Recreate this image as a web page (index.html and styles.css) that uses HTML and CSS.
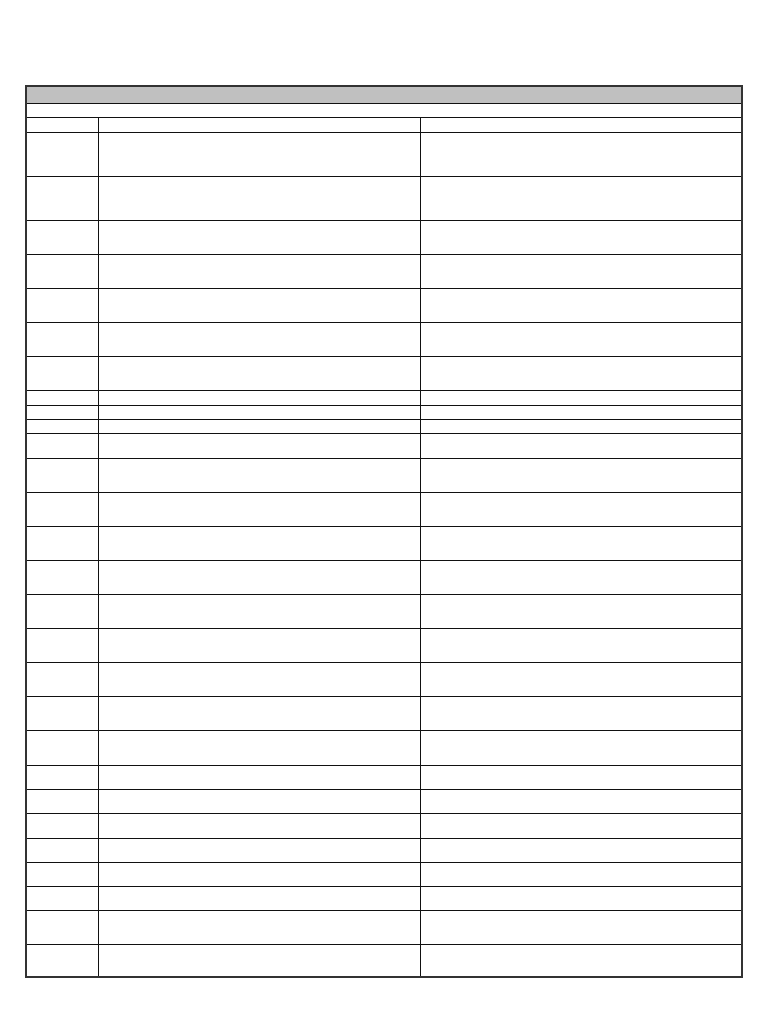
FILE: index.html
```html
<!DOCTYPE html>
<html lang="en">
<head>
<meta charset="utf-8">
<title>Table</title>
<link rel="stylesheet" href="styles.css">
</head>
<body>
<div class="page">
<table class="sheet">
<colgroup><col class="c1"><col class="c2"><col class="c3"></colgroup>
<tbody>
<tr class="r17 head"><td colspan="3"></td></tr>
<tr class="r14"><td colspan="3"></td></tr>
<tr class="r15"><td></td><td></td><td></td></tr>
<tr class="r44"><td></td><td></td><td></td></tr>
<tr class="r44"><td></td><td></td><td></td></tr>
<tr class="r34"><td></td><td></td><td></td></tr>
<tr class="r34"><td></td><td></td><td></td></tr>
<tr class="r34"><td></td><td></td><td></td></tr>
<tr class="r34"><td></td><td></td><td></td></tr>
<tr class="r34"><td></td><td></td><td></td></tr>
<tr class="r15"><td></td><td></td><td></td></tr>
<tr class="r14"><td></td><td></td><td></td></tr>
<tr class="r14"><td></td><td></td><td></td></tr>
<tr class="r25"><td></td><td></td><td></td></tr>
<tr class="r34"><td></td><td></td><td></td></tr>
<tr class="r34"><td></td><td></td><td></td></tr>
<tr class="r34"><td></td><td></td><td></td></tr>
<tr class="r34"><td></td><td></td><td></td></tr>
<tr class="r34"><td></td><td></td><td></td></tr>
<tr class="r34"><td></td><td></td><td></td></tr>
<tr class="r34"><td></td><td></td><td></td></tr>
<tr class="r34"><td></td><td></td><td></td></tr>
<tr class="r35"><td></td><td></td><td></td></tr>
<tr class="r24"><td></td><td></td><td></td></tr>
<tr class="r24"><td></td><td></td><td></td></tr>
<tr class="r25"><td></td><td></td><td></td></tr>
<tr class="r24"><td></td><td></td><td></td></tr>
<tr class="r24"><td></td><td></td><td></td></tr>
<tr class="r24"><td></td><td></td><td></td></tr>
<tr class="r34"><td></td><td></td><td></td></tr>
<tr class="r33"><td></td><td></td><td></td></tr>
</tbody>
</table>
</div>
</body>
</html>
```
FILE: styles.css
```css
html, body {
  margin: 0;
  padding: 0;
  background: #ffffff;
  font-family: "Liberation Sans", Arial, sans-serif;
}

.page {
  padding: 85px 0 0 25px;
}

.sheet {
  border-collapse: collapse;
  table-layout: fixed;
  width: 716px;
  border: 2px solid #333333;
}

.c1 { width: 72px; }
.c2 { width: 322px; }
.c3 { width: 322px; }

.sheet td {
  padding: 0;
  border: 1px solid #111111;
  font-size: 1px;
  line-height: 0;
}

.head td {
  background: #c0c0c0;
}

.r14 { height: 14px; }
.r15 { height: 15px; }
.r17 { height: 17px; }
.r24 { height: 24px; }
.r25 { height: 25px; }
.r33 { height: 33px; }
.r34 { height: 34px; }
.r35 { height: 35px; }
.r44 { height: 44px; }
```
